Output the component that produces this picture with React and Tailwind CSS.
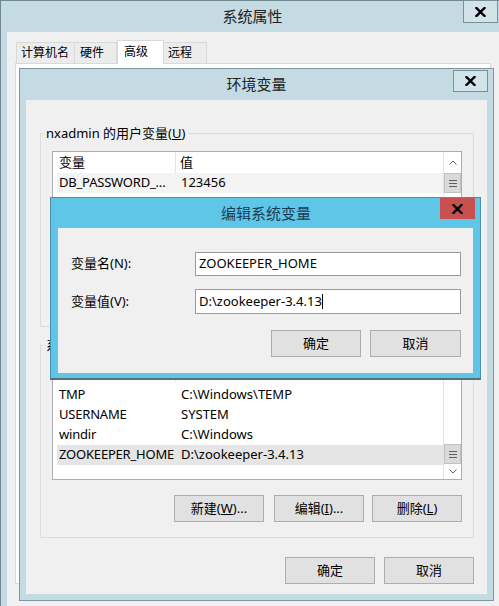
import React from 'react'

const CloseX = () => (
  <svg width="11" height="10" viewBox="0 0 11 10">
    <path d="M1.5 1 L9.5 9 M9.5 1 L1.5 9" stroke="#000" strokeWidth="2.4" strokeLinecap="square" fill="none" />
  </svg>
)

const Chevron = ({ up }) => (
  <svg width="8" height="5" viewBox="0 0 8 5">
    <path d={up ? 'M0.5 4.5 L4 1 L7.5 4.5' : 'M0.5 0.5 L4 4 L7.5 0.5'} stroke="#606060" strokeWidth="1" fill="none" />
  </svg>
)

const Grip = () => (
  <svg width="8" height="7" viewBox="0 0 8 7">
    <path d="M0 0.5 H8 M0 3.5 H8 M0 6.5 H8" stroke="#606060" strokeWidth="1" />
  </svg>
)

function Btn({ children, className = '' }) {
  return (
    <div className={`w-[90px] h-[27px] flex items-center justify-center bg-[#e1e1e1] border border-[#adadad] text-[13px] ${className}`}>
      {children}
    </div>
  )
}

function Row({ name, value, active }) {
  return (
    <div className={`flex h-[20px] items-center ml-[4px] ${active ? 'bg-[#e5e5e5]' : ''}`}>
      <span className="w-[119px] pl-[2px] whitespace-nowrap overflow-hidden tracking-[-0.2px]">{name}</span>
      <span className="pl-[5px] whitespace-nowrap">{value}</span>
    </div>
  )
}

function ListHeader({ lift }) {
  return (
    <div className={`flex h-[21px] items-center ${lift ? 'pb-[3px]' : ''}`}>
      <span className="w-[123px] pl-[6px] border-r border-[#e5e5e5] self-stretch flex items-center">变量</span>
      <span className="pl-[4px]">值</span>
    </div>
  )
}

export default function App() {
  return (
    <div className="relative w-[499px] h-[606px] overflow-hidden bg-[#c5dbe3] font-['Noto_Sans','Noto_Sans_CJK_SC',sans-serif] text-[13px] text-black">
      {/* 系统属性 */}
      <div className="flex flex-col h-full border-l border-t border-[#6f8892]">
        <div className="flex h-[31px] items-start">
          <div className="flex-1 h-full flex items-center justify-center pl-[41px] text-[15px] text-[#222]">系统属性</div>
          <div className="w-[35px] h-[23px] mr-[1px] -mt-px flex items-center justify-center bg-[#d2e3e9] border border-[#7a9099]">
            <CloseX />
          </div>
        </div>
        <div className="flex-1 ml-[6px] bg-[#f0f0f0] pt-[7px] pl-[8px] flex flex-col">
          <div className="flex items-end h-[24px] pl-[1px] text-[12px]">
            <div className="h-[21px] w-[59px] pl-[4px] flex items-center bg-[#ececec] border border-[#d9d9d9] border-b-0">计算机名</div>
            <div className="h-[21px] w-[42px] pl-[5px] flex items-center bg-[#ececec] border border-[#d9d9d9] border-b-0 border-l-0">硬件</div>
            <div className="h-[24px] w-[47px] -mb-px z-10 flex items-start pt-[2px] pl-[6px] bg-white border border-[#d9d9d9] border-b-0">高级</div>
            <div className="h-[21px] w-[43px] pl-[4px] flex items-center bg-[#ececec] border border-[#d9d9d9] border-b-0 border-l-0">远程</div>
          </div>
          <div className="w-[476px] h-[521px] bg-white border border-[#d9d9d9]" />
        </div>
      </div>

      {/* 环境变量 */}
      <div className="absolute left-[19px] top-[68px] w-[475px] h-[533px] flex flex-col border border-[#7f969f] bg-[#c5dbe3]">
        <div className="flex h-[31px] items-start">
          <div className="flex-1 h-full flex items-center justify-center pl-[40px] text-[15px] text-[#222]">环境变量</div>
          <div className="w-[35px] h-[22px] mr-[5px] mt-[1px] flex items-center justify-center bg-[#d2e3e9] border border-[#7a9099]">
            <CloseX />
          </div>
        </div>
        <div className="flex-1 mx-[6px] mb-[6px] bg-[#f0f0f0] flex flex-col pt-[33px]">
          <div className="ml-[14px] w-[434px] h-[194px] border border-[#dcdcdc] flex flex-col">
            <div className="-mt-[9px] ml-[2px] px-[3px] w-fit leading-[17px] bg-[#f0f0f0]">nxadmin 的用户变量(<span className="underline">U</span>)</div>
            <div className="mt-[9px] ml-[11px] w-[410px] h-[131px] bg-white border border-[#abadb3] flex">
              <div className="flex-1 flex flex-col">
                <ListHeader />
                <div className="flex h-[20px] items-center ml-[4px] bg-[#f3f3f3]">
                  <span className="w-[119px] pl-[2px] whitespace-nowrap tracking-[-0.2px]">DB_PASSWORD_...</span>
                  <span className="pl-[5px]">123456</span>
                </div>
              </div>
              <div className="w-[18px] flex flex-col items-center border-l border-[#e3e3e3]">
                <div className="h-[21px] flex items-center justify-center"><Chevron up /></div>
                <div className="w-[17px] h-[20px] bg-[#dadada] border border-[#c2c2c2] flex items-center justify-center"><Grip /></div>
              </div>
            </div>
          </div>

          <div className="mt-[18px] ml-[14px] w-[434px] h-[193px] border border-[#dcdcdc] flex flex-col">
            <div className="-mt-[9px] ml-[2px] px-[3px] w-fit leading-[17px] bg-[#f0f0f0]">系统变量(<span className="underline">S</span>)</div>
            <div className="mt-[9px] ml-[11px] w-[410px] h-[117px] bg-white border border-[#abadb3] flex">
              <div className="flex-1 flex flex-col">
                <ListHeader lift />
                <Row name="TMP" value="C:\Windows\TEMP" />
                <Row name="USERNAME" value="SYSTEM" />
                <Row name="windir" value="C:\Windows" />
                <Row name="ZOOKEEPER_HOME" value="D:\zookeeper-3.4.13" active />
              </div>
              <div className="w-[18px] flex flex-col items-center justify-end border-l border-[#e3e3e3]">
                <div className="w-[17px] h-[20px] bg-[#dadada] border border-[#c2c2c2] flex items-center justify-center"><Grip /></div>
                <div className="h-[15px] flex items-center justify-center"><Chevron /></div>
              </div>
            </div>
            <div className="mt-[15px] mr-[11px] flex justify-end">
              <Btn>新建(<span className="underline">W</span>)...</Btn>
              <Btn className="ml-[10px]">编辑(<span className="underline">I</span>)...</Btn>
              <Btn className="ml-[8px]">删除(<span className="underline">L</span>)</Btn>
            </div>
          </div>

          <div className="mt-[19px] mr-[13px] flex justify-end">
            <Btn>确定</Btn>
            <Btn className="ml-[9px]">取消</Btn>
          </div>
        </div>
      </div>

      {/* 编辑系统变量 */}
      <div className="absolute left-[50px] top-[197px] w-[431px] h-[183px] flex flex-col border border-[#4a8fae] border-b-2 border-b-[#56707a] bg-[#5fc6e8]">
        <div className="flex h-[30px] items-start">
          <div className="flex-1 h-full flex items-center justify-center pl-[41px] text-[15px] text-[#1b3d50]">编辑系统变量</div>
          <div className="w-[35px] h-[21px] mr-[5px] flex items-center justify-center bg-[#c75050]">
            <CloseX />
          </div>
        </div>
        <div className="flex-1 mx-[7px] mb-[5px] bg-[#f0f0f0] flex flex-col pl-[13px] pr-[12px]">
          <div className="mt-[24px] flex items-center">
            <span className="w-[124px]">变量名(N):</span>
            <div className="w-[266px] h-[24px] bg-white border border-[#9a9a9a] flex items-center pl-[3px]">ZOOKEEPER_HOME</div>
          </div>
          <div className="mt-[13px] flex items-center">
            <span className="w-[124px]">变量值(V):</span>
            <div className="w-[266px] h-[25px] bg-white border border-[#9a9a9a] flex items-center pl-[3px]">
              D:\zookeeper-3.4.13<span className="w-px h-[15px] bg-black" />
            </div>
          </div>
          <div className="mt-[16px] flex justify-end">
            <Btn className="border-[#7f97a8]">确定</Btn>
            <Btn className="ml-[9px] w-[91px]">取消</Btn>
          </div>
        </div>
      </div>
    </div>
  )
}
